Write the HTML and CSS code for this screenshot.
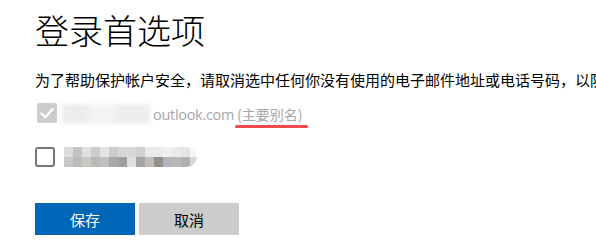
FILE: index.html
```html
<!DOCTYPE html>
<html lang="zh-CN">
<head>
<meta charset="utf-8">
<title>登录首选项</title>
<link rel="stylesheet" href="styles.css">
</head>
<body>
<main class="page">
  <h1 class="title">登录首选项</h1>
  <p class="intro">为了帮助保护帐户安全，请取消选中任何你没有使用的电子邮件地址或电话号码，以防止它们被用于登录。</p>
  <div class="options">
    <label class="option option-primary">
      <span class="box box-disabled">
        <svg viewBox="0 0 20 20" width="20" height="20"><path d="M4.5 10.5 L8.3 14.2 L15.5 6.2" fill="none" stroke="#fff" stroke-width="2.4" stroke-linecap="round" stroke-linejoin="round"/></svg>
      </span>
      <span class="addr">
        <span class="blur-name"></span><span class="domain">outlook.com</span>
        <span class="alias">(主要别名)</span>
      </span>
    </label>
    <label class="option">
      <span class="box"></span>
      <span class="mosaic">
        <span class="mosaic-row mosaic-top"></span>
        <span class="mosaic-row mosaic-bottom"></span>
      </span>
    </label>
  </div>
  <div class="actions">
    <button class="btn btn-primary">保存</button>
    <button class="btn btn-secondary">取消</button>
  </div>
</main>
</body>
</html>
```
FILE: styles.css
```css
html, body {
  margin: 0;
  padding: 0;
  background: #fff;
  overflow: hidden;
}
body {
  font-family: "Segoe UI", "Noto Sans", "Noto Sans CJK SC", sans-serif;
  color: #000;
  width: 596px;
  height: 250px;
}
.page {
  padding-left: 35px;
  padding-top: 8px;
}
.title {
  margin: 0;
  font-family: "Noto Sans CJK SC", sans-serif;
  font-size: 34px;
  font-weight: 300;
  line-height: 44px;
  letter-spacing: 0;
}
.intro {
  margin: 17px 0 0 0;
  font-family: "Noto Sans CJK SC", sans-serif;
  font-size: 15px;
  line-height: 22px;
  white-space: nowrap;
}
.options {
  display: flex;
  flex-direction: column;
  gap: 24px;
  margin-top: 12px;
}
.option {
  display: flex;
  align-items: center;
  height: 20px;
}
.option-primary {
  padding-left: 2px;
}
.box {
  width: 20px;
  height: 20px;
  box-sizing: border-box;
  border: 2px solid #767676;
  border-radius: 3px;
  flex: none;
}
.box-disabled {
  border: none;
  background: #cccccc;
  border-radius: 2px;
}
.box-disabled svg {
  display: block;
}
.addr {
  display: flex;
  align-items: center;
  position: relative;
  margin-left: 5px;
  padding-top: 2px;
  font-size: 15px;
  color: #a6a6a6;
}
.blur-name {
  display: inline-block;
  width: 88px;
  height: 20px;
  background: linear-gradient(90deg, #ececec 0 30%, #f3f3f3 30% 60%, #eeeeee 60% 100%);
  filter: blur(2px);
  margin-right: 3px;
}
.domain {
  font-family: "Open Sans", "Noto Sans", sans-serif;
  font-size: 14.5px;
  letter-spacing: -0.3px;
}
.alias {
  position: relative;
  margin-left: 3px;
  font-family: "Noto Sans CJK SC", sans-serif;
  font-size: 14px;
}
.alias::after {
  content: "";
  position: absolute;
  left: -2px;
  right: -5px;
  bottom: -4px;
  height: 3px;
  border-radius: 2px;
  background: #f04a4a;
}
.mosaic {
  display: flex;
  flex-direction: column;
  margin-left: 9px;
  width: 133px;
  height: 20px;
  border-radius: 0 10px 10px 0;
  overflow: hidden;
}
.mosaic-row {
  display: block;
  height: 10px;
}
.mosaic-top {
  background: linear-gradient(90deg,
    #dcdcdc 0 9px, #c4c4c4 9px 18px, #e0e0e0 18px 27px, #d0ccc8 27px 36px,
    #e4e4e4 36px 45px, #cccccc 45px 54px, #d4d8dc 54px 63px, #d8d8d8 63px 72px,
    #d0d0d0 72px 81px, #e8e8e8 81px 90px, #ececec 90px 99px, #f0f0f0 99px 108px,
    #e8e8ec 108px 117px, #e4e4e4 117px 126px, #f4f4f4 126px 133px);
}
.mosaic-bottom {
  background: linear-gradient(90deg,
    #c8c8c8 0 9px, #bcbcbc 9px 18px, #c8c8c4 18px 27px, #bcb8b8 27px 36px,
    #c0c0c0 36px 45px, #a8a8a8 45px 54px, #a0a0a0 54px 63px, #e0e0e0 63px 72px,
    #a8a4a4 72px 81px, #c0bcb4 81px 90px, #909090 90px 99px, #b0b4bc 99px 108px,
    #bcb8b4 108px 117px, #b0b0b0 117px 126px, #d8d8d8 126px 133px);
}
.actions {
  display: flex;
  gap: 4px;
  margin-top: 36px;
}
.btn {
  width: 100px;
  height: 32px;
  border: none;
  border-radius: 0;
  padding: 0;
  font-family: "Noto Sans CJK SC", sans-serif;
  font-size: 15px;
  cursor: pointer;
}
.btn-primary {
  background: #0067b8;
  color: #fff;
}
.btn-secondary {
  background: #cccccc;
  color: #000;
}
```
